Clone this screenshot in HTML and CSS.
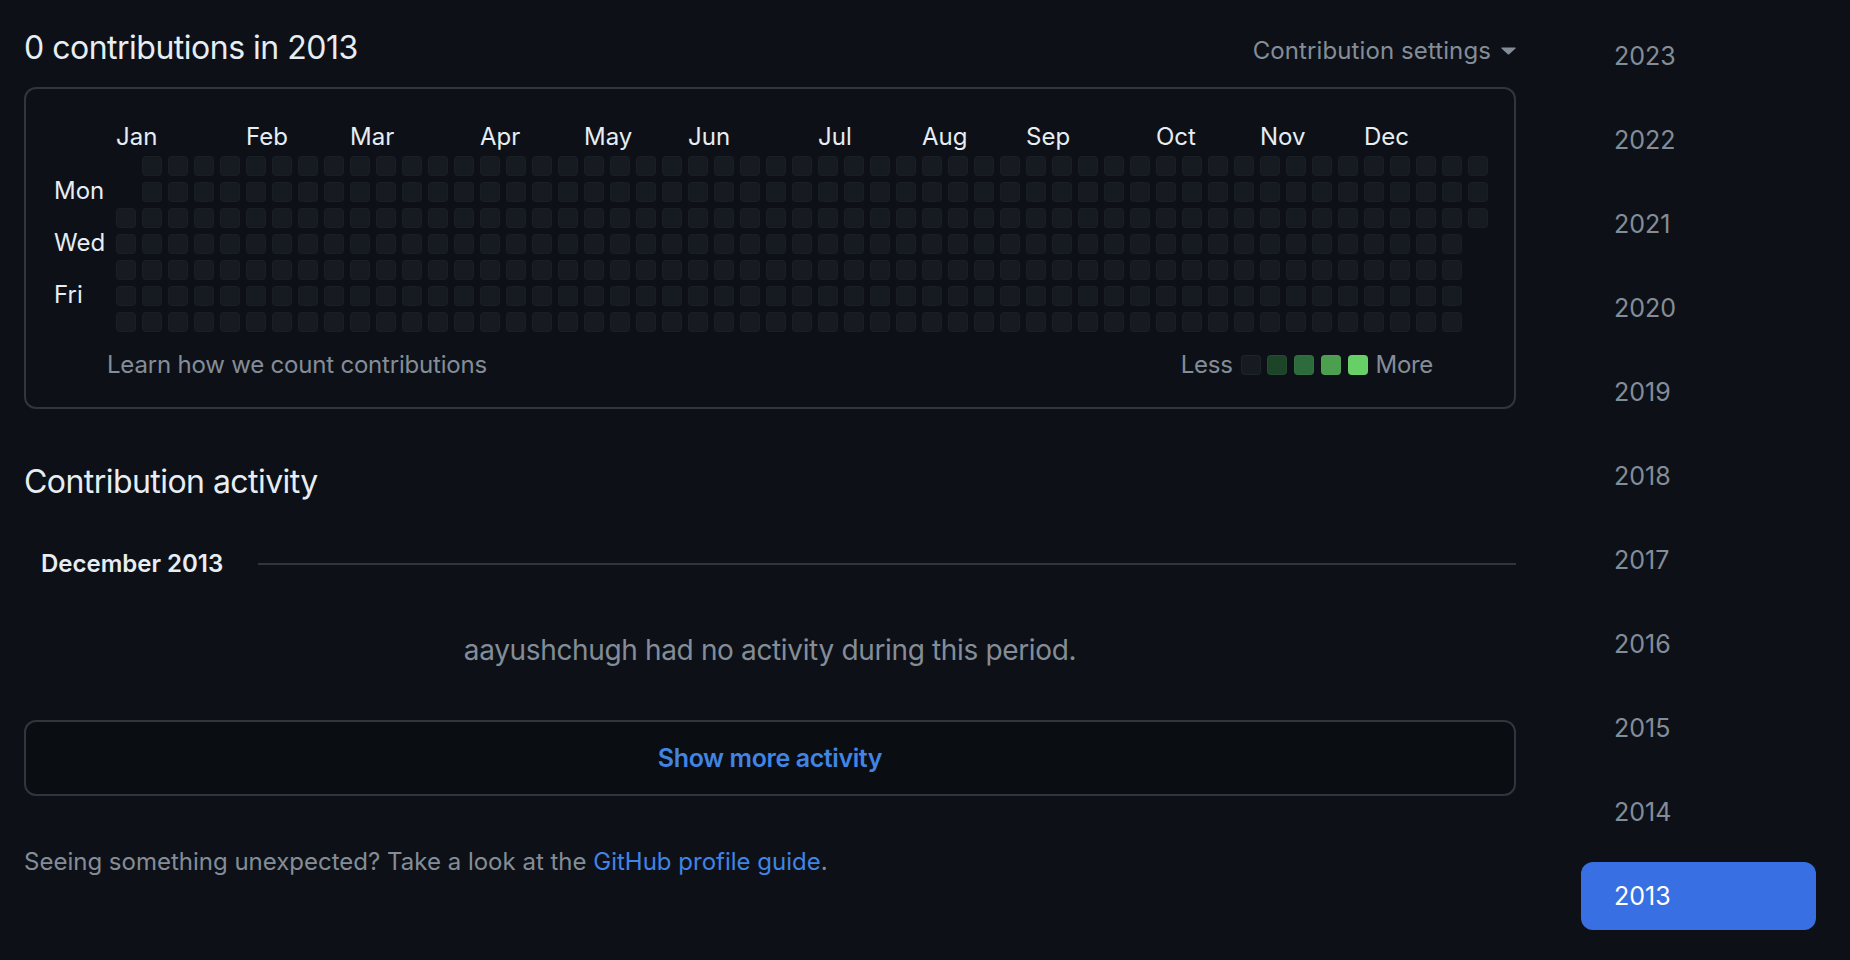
FILE: index.html
```html
<!DOCTYPE html>
<html lang="en">
<head>
<meta charset="utf-8">
<title>Contributions</title>
<link rel="stylesheet" href="styles.css">
</head>
<body>
<div class="page">
  <main class="main">
    <div class="header">
      <h2 class="title">0 contributions in 2013</h2>
      <span class="settings">Contribution settings<svg class="caret" width="15" height="8" viewBox="0 0 15 8"><path d="M1 0.5h13c0.6 0 0.9 0.7 0.5 1.1L8.2 7.3c-0.4 0.4-1 0.4-1.4 0L0.5 1.6C0.1 1.2 0.4 0.5 1 0.5z" fill="currentColor"/></svg></span>
    </div>

    <div class="graph-box">
      <div class="graph-body">
        <div class="months">
          <span class="month m-jan">Jan</span>
          <span class="month m-feb">Feb</span>
          <span class="month m-mar">Mar</span>
          <span class="month m-apr">Apr</span>
          <span class="month m-may">May</span>
          <span class="month m-jun">Jun</span>
          <span class="month m-jul">Jul</span>
          <span class="month m-aug">Aug</span>
          <span class="month m-sep">Sep</span>
          <span class="month m-oct">Oct</span>
          <span class="month m-nov">Nov</span>
          <span class="month m-dec">Dec</span>
        </div>
        <div class="days">
          <span></span>
          <span class="day">Mon</span>
          <span></span>
          <span class="day">Wed</span>
          <span></span>
          <span class="day">Fri</span>
          <span></span>
        </div>
        <div class="cells" id="cells"></div>
      </div>
      <div class="graph-footer">
        <span class="learn">Learn how we count contributions</span>
        <div class="legend">
          <span class="legend-text less">Less</span>
          <span class="sq l0"></span>
          <span class="sq l1"></span>
          <span class="sq l2"></span>
          <span class="sq l3"></span>
          <span class="sq l4"></span>
          <span class="legend-text more">More</span>
        </div>
      </div>
    </div>

    <h2 class="activity-title">Contribution activity</h2>

    <div class="month-row">
      <h3 class="month-name">December 2013</h3>
      <div class="month-line"></div>
    </div>

    <p class="empty">aayushchugh had no activity during this period.</p>

    <button class="more-btn">Show more activity</button>

    <p class="hint">Seeing something unexpected? Take a look at the <a class="link" href="#">GitHub profile guide</a>.</p>
  </main>

  <aside class="years">
    <a class="year" href="#">2023</a>
    <a class="year" href="#">2022</a>
    <a class="year" href="#">2021</a>
    <a class="year" href="#">2020</a>
    <a class="year" href="#">2019</a>
    <a class="year" href="#">2018</a>
    <a class="year" href="#">2017</a>
    <a class="year" href="#">2016</a>
    <a class="year" href="#">2015</a>
    <a class="year" href="#">2014</a>
    <a class="year selected" href="#">2013</a>
  </aside>
</div>
<script src="script.js"></script>
</body>
</html>
```

FILE: styles.css
```css
* { box-sizing: border-box; }

body {
  margin: 0;
  background: #0d1117;
  color: #e6edf3;
  font-family: Inter, "Liberation Sans", Arial, sans-serif;
}

.page {
  display: flex;
  gap: 65px;
  padding-left: 24px;
}

.main {
  width: 1492px;
  flex: none;
}

.header {
  display: flex;
  justify-content: space-between;
  align-items: baseline;
  padding-top: 28px;
  margin-bottom: 19px;
}

.title {
  margin: 0;
  font-size: 32px;
  line-height: 40px;
  font-weight: 400;
  letter-spacing: -0.5px;
}

.settings {
  font-size: 24px;
  line-height: 30px;
  color: #848d97;
  letter-spacing: 0.1px;
}

.caret {
  margin-left: 10px;
  vertical-align: 4px;
}

.graph-box {
  border: 2px solid #30363d;
  border-radius: 12px;
  padding: 33px 0 27px 28px;
}

.graph-body {
  display: grid;
  grid-template-columns: 62px auto;
}

.months {
  grid-column: 2;
  grid-row: 1;
  display: grid;
  grid-template-columns: repeat(53, 20px);
  column-gap: 6px;
  height: 30px;
  margin-bottom: 4px;
  font-size: 24px;
  line-height: 30px;
}

.month { white-space: nowrap; grid-row: 1; }
.m-jan { grid-column: 1 / span 4; }
.m-feb { grid-column: 6 / span 4; }
.m-mar { grid-column: 10 / span 4; }
.m-apr { grid-column: 15 / span 4; }
.m-may { grid-column: 19 / span 4; }
.m-jun { grid-column: 23 / span 4; }
.m-jul { grid-column: 28 / span 4; }
.m-aug { grid-column: 32 / span 4; }
.m-sep { grid-column: 36 / span 4; }
.m-oct { grid-column: 41 / span 4; }
.m-nov { grid-column: 45 / span 4; }
.m-dec { grid-column: 49 / span 4; }

.days {
  grid-column: 1;
  grid-row: 2;
  display: grid;
  grid-template-rows: repeat(7, 20px);
  row-gap: 6px;
  font-size: 24px;
  line-height: 17px;
}

.day { white-space: nowrap; }

.cells {
  grid-column: 2;
  grid-row: 2;
  display: grid;
  grid-template-rows: repeat(7, 20px);
  grid-auto-columns: 20px;
  grid-auto-flow: column;
  gap: 6px;
}

.cell {
  width: 20px;
  height: 20px;
  border-radius: 4px;
  background: #161b22;
  box-shadow: inset 0 0 0 1px rgba(255, 255, 255, 0.02);
}

.cell-blank { visibility: hidden; }

.graph-footer {
  display: flex;
  justify-content: space-between;
  align-items: center;
  margin-top: 18px;
  padding: 0 81px 0 53px;
  font-size: 24px;
  line-height: 30px;
  color: #848d97;
}

.learn { letter-spacing: -0.2px; }

.legend {
  display: flex;
  align-items: center;
  gap: 6.75px;
}

.legend-text { letter-spacing: -0.3px; }
.less { margin-right: 1.25px; }
.more { margin-left: 1.25px; }

.sq {
  width: 20px;
  height: 20px;
  border-radius: 4px;
  box-shadow: inset 0 0 0 1px rgba(255, 255, 255, 0.04);
}

.l0 { background: #161b22; }
.l1 { background: #1d4428; }
.l2 { background: #2c6b3b; }
.l3 { background: #4b9f4f; }
.l4 { background: #66cf66; }

.activity-title {
  margin: 53px 0 0;
  font-size: 32px;
  line-height: 40px;
  font-weight: 400;
  letter-spacing: -0.55px;
}

.month-row {
  display: flex;
  align-items: center;
  margin-top: 47px;
}

.month-name {
  margin: 0;
  padding-left: 17px;
  font-size: 24px;
  line-height: 30px;
  font-weight: 600;
  white-space: nowrap;
}

.month-line {
  flex: 1;
  height: 2px;
  margin-left: 35px;
  background: #30363d;
}

.empty {
  margin: 53px 0 0;
  text-align: center;
  font-size: 28px;
  line-height: 36px;
  color: #848d97;
  letter-spacing: -0.35px;
}

.more-btn {
  display: block;
  width: 100%;
  height: 76px;
  margin-top: 52px;
  border: 2px solid #30363d;
  border-radius: 12px;
  background: #0a0d12;
  color: #4184e4;
  font-family: inherit;
  font-size: 25px;
  font-weight: 600;
  letter-spacing: -0.4px;
}

.hint {
  margin: 49px 0 0;
  font-size: 24px;
  line-height: 34px;
  color: #848d97;
}

.link {
  color: #4184e4;
  text-decoration: none;
}

.years {
  width: 235px;
  padding-top: 22px;
  display: flex;
  flex-direction: column;
  gap: 16px;
}

.year {
  display: block;
  height: 68px;
  padding: 0 33px;
  border-radius: 12px;
  font-size: 25px;
  line-height: 68px;
  color: #848d97;
  text-decoration: none;
}

.year.selected {
  background: #3870e3;
  color: #ffffff;
}
```

FILE: script.js
```js
(function () {
  var grid = document.getElementById('cells');
  // 2013 starts on a Tuesday: two blank slots (Sun, Mon) then 365 days.
  for (var i = 0; i < 367; i++) {
    var c = document.createElement('span');
    c.className = i < 2 ? 'cell cell-blank' : 'cell';
    grid.appendChild(c);
  }
})();
```
